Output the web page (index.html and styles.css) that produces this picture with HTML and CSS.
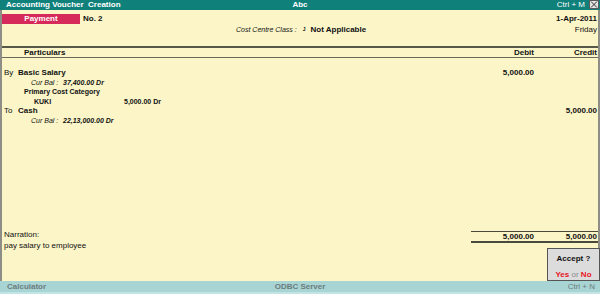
FILE: index.html
```html
<!DOCTYPE html>
<html lang="en">
<head>
    <meta charset="UTF-8">
    <meta name="viewport" content="width=device-width, initial-scale=1.0">
    <title>Accounting Voucher Creation</title>
    <link rel="stylesheet" href="styles.css">
</head>
<body>
    <div class="screen">
        <div class="titlebar">
            <div class="title-left">Accounting Voucher&nbsp; Creation</div>
            <div class="title-mid">Abc</div>
            <div class="title-right">
                <span>Ctrl + M</span>
                <svg class="close" width="10" height="9" viewBox="0 0 10 9">
                    <rect x="0.5" y="0.5" width="9" height="8" fill="#e4e4e4" stroke="#5a5a5a"/>
                    <path d="M2 1.5 L8 7.5 M8 1.5 L2 7.5" stroke="#333" stroke-width="1"/>
                </svg>
            </div>
        </div>

        <div class="voucher">
            <div class="head">
                <div class="head-row">
                    <span class="payment">Payment</span>
                    <span class="vno">No. 2</span>
                    <span class="date">1-Apr-2011</span>
                </div>
                <div class="head-row sub">
                    <span class="cc-label">Cost Centre Class :</span>
                    <span class="cc-mark">J</span>
                    <span class="cc-value">Not Applicable</span>
                    <span class="day">Friday</span>
                </div>
            </div>

            <div class="colhead">
                <div class="col-part">Particulars</div>
                <div class="num">Debit</div>
                <div class="num">Credit</div>
            </div>

            <div class="entries">
                <div class="row">
                    <div class="acct"><span class="dir">By</span><b>Basic Salary</b></div>
                    <div class="num">5,000.00</div>
                    <div class="num"></div>
                </div>
                <div class="row">
                    <div class="bal"><span class="bal-label">Cur Bal :</span><span class="bal-value">37,400.00 Dr</span></div>
                    <div></div>
                    <div></div>
                </div>
                <div class="row">
                    <div class="category">Primary Cost Category</div>
                    <div></div>
                    <div></div>
                </div>
                <div class="row">
                    <div class="centre"><span class="centre-name">KUKI</span><span>5,000.00 Dr</span></div>
                    <div></div>
                    <div></div>
                </div>
                <div class="row">
                    <div class="acct"><span class="dir">To</span><b>Cash</b></div>
                    <div class="num"></div>
                    <div class="num">5,000.00</div>
                </div>
                <div class="row">
                    <div class="bal"><span class="bal-label">Cur Bal :</span><span class="bal-value">22,13,000.00 Dr</span></div>
                    <div></div>
                    <div></div>
                </div>
            </div>

            <div class="foot">
                <div class="narration">
                    <div>Narration:</div>
                    <div>pay salary to employee</div>
                </div>
                <div class="summary">
                    <div class="totals">
                        <div class="num">5,000.00</div>
                        <div class="num">5,000.00</div>
                    </div>
                    <div class="accept">
                        <div class="accept-q">Accept ?</div>
                        <div class="accept-a"><span class="yn">Yes</span> <span class="or">or</span> <span class="yn">No</span></div>
                    </div>
                </div>
            </div>
        </div>

        <div class="statusbar">
            <div class="status-left">Calculator</div>
            <div class="status-mid">ODBC Server</div>
            <div class="status-right">Ctrl + N</div>
        </div>
    </div>
</body>
</html>
```

FILE: styles.css
```css
* {
    box-sizing: border-box;
}
body {
    margin: 0;
    font-family: "Liberation Sans", Arial, sans-serif;
    font-size: 8px;
    color: #111;
}
.screen {
    width: 600px;
    height: 294px;
    display: flex;
    flex-direction: column;
}
.titlebar {
    display: grid;
    grid-template-columns: 1fr auto 1fr;
    height: 10px;
    line-height: 10px;
    background-color: #10807b;
    color: #fff;
    font-weight: bold;
}
.title-left {
    padding-left: 6px;
}
.title-right {
    justify-self: end;
    display: flex;
    align-items: flex-start;
    gap: 4px;
    padding-right: 1px;
    font-weight: normal;
}
.close {
    display: block;
}
.voucher {
    flex: 1;
    display: flex;
    flex-direction: column;
    background-color: #fbf5c8;
    border-left: 2px solid #8e8e86;
    border-right: 2px solid #8e8e86;
}
.head {
    padding: 4px 1px 11px 0;
}
.head-row {
    display: flex;
    align-items: center;
    line-height: 10px;
}
.payment {
    width: 78px;
    background-color: #d62b5a;
    color: #fff;
    font-weight: bold;
    text-align: center;
}
.vno {
    margin-left: 3px;
    font-weight: bold;
}
.date {
    margin-left: auto;
    font-weight: bold;
}
.head-row.sub {
    margin-top: 1px;
    padding-left: 234px;
}
.cc-label {
    font-size: 7px;
    font-style: italic;
}
.cc-mark {
    font-size: 5px;
    font-weight: bold;
    margin-left: 6px;
    align-self: flex-start;
    line-height: 8px;
}
.cc-value {
    margin-left: 5px;
    font-weight: bold;
}
.day {
    margin-left: auto;
}
.colhead {
    display: grid;
    grid-template-columns: 1fr 63px 63px;
    padding-right: 1px;
    border-top: 2px solid #57574a;
    border-bottom: 1px solid #6a6a5c;
    line-height: 9px;
    font-weight: bold;
}
.col-part {
    padding-left: 22px;
}
.num {
    text-align: right;
    font-weight: bold;
}
.entries {
    flex: 1;
    padding-top: 10px;
}
.row {
    display: grid;
    grid-template-columns: 1fr 63px 63px;
    padding-right: 1px;
    line-height: 9.5px;
}
.acct {
    padding-left: 2px;
}
.dir {
    display: inline-block;
    width: 14px;
}
.bal {
    padding-left: 29px;
    font-size: 7px;
    font-style: italic;
}
.bal-label {
    display: inline-block;
    width: 32px;
}
.bal-value {
    font-weight: bold;
}
.category {
    padding-left: 22px;
    font-size: 7px;
    font-weight: bold;
}
.centre {
    padding-left: 32px;
    font-size: 7px;
    font-weight: bold;
}
.centre-name {
    display: inline-block;
    width: 90px;
}
.foot {
    display: flex;
}
.narration {
    flex: 1;
    padding-left: 2px;
    margin-top: -2px;
    line-height: 11px;
}
.summary {
    width: 127px;
    display: flex;
    flex-direction: column;
    align-items: flex-end;
}
.totals {
    width: 100%;
    display: grid;
    grid-template-columns: 63px 63px;
    padding-right: 1px;
    border-top: 1px solid #4a4a3c;
    border-bottom: 2px solid #4a4a3c;
    line-height: 9px;
}
.accept {
    width: 53px;
    height: 33px;
    margin-top: 5px;
    margin-right: -2px;
    padding-top: 5px;
    border: 1px solid #555;
    background-color: #dcdcdc;
    text-align: center;
    line-height: 10px;
}
.accept-q {
    font-weight: bold;
}
.accept-a {
    margin-top: 6px;
}
.yn {
    color: #e8141e;
    font-weight: bold;
}
.or {
    color: #8a8a8a;
}
.statusbar {
    display: grid;
    grid-template-columns: 1fr auto 1fr;
    height: 13px;
    line-height: 11px;
    background-color: #a8d4d4;
    border-bottom: 2px solid #c2e4e4;
    color: #6c7c7c;
    font-weight: bold;
}
.status-left {
    padding-left: 7px;
}
.status-right {
    justify-self: end;
    padding-right: 5px;
    font-weight: normal;
}
```
